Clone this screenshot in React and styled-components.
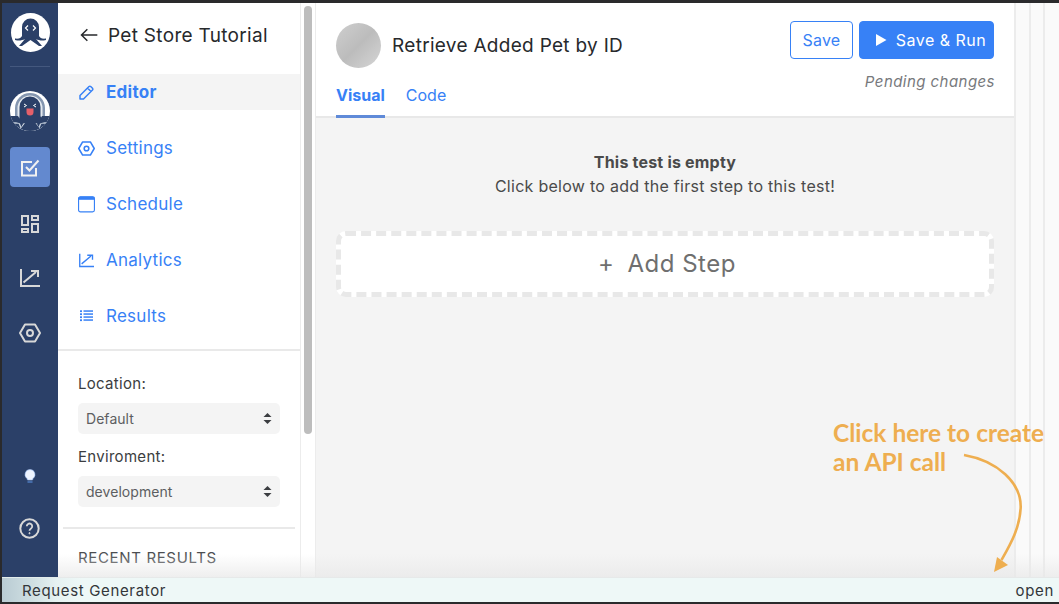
import React from 'react';
import styled, { createGlobalStyle } from 'styled-components';

const GlobalStyle = createGlobalStyle`
  html, body {
    margin: 0;
    padding: 0;
    height: 100%;
    overflow: hidden;
    background: #2a2a2c;
    font-family: Inter, "Liberation Sans", sans-serif;
  }
  * { box-sizing: border-box; }
`;

const Page = styled.div`
  position: relative;
  width: 1059px;
  height: 604px;
  display: flex;
  flex-direction: column;
  padding: 3px 0 2px 2px;
  background: #2a2a2c;
  overflow: hidden;
`;

const Body = styled.div`
  flex: 1;
  min-height: 0;
  display: flex;
  background: #fff;
`;

const NavRail = styled.nav`
  width: 56px;
  flex: none;
  display: flex;
  flex-direction: column;
  align-items: center;
  background: #2b4068;
  padding-top: 10px;
`;

const RailDivider = styled.div`
  width: 40px;
  height: 1px;
  background: #44587e;
  margin: 14px 0 24px -1px;
`;

const RailTile = styled.div`
  width: 40px;
  height: 40px;
  margin: 16px 0 0 -1px;
  display: flex;
  align-items: center;
  justify-content: center;
  border-radius: 4px;
  background: #6389cf;
  color: #f1f1f1;
`;

const RailIcon = styled.div`
  width: 40px;
  height: 30px;
  margin: ${(p) => p.$top}px 0 0 -1px;
  display: flex;
  align-items: center;
  justify-content: center;
  color: #d8d8d8;
`;

const SidePanel = styled.aside`
  width: 242px;
  flex: none;
  display: flex;
  flex-direction: column;
  overflow: hidden;
`;

const BackRow = styled.div`
  height: 64px;
  padding: 0 0 0 21px;
  display: flex;
  align-items: center;
  gap: 9px;
  color: #27292c;
  font-size: 19px;
  letter-spacing: 0.3px;
`;

const Menu = styled.div`
  margin-top: 7px;
  display: flex;
  flex-direction: column;
  gap: 20px;
  padding-bottom: 15px;
  border-bottom: 2px solid #e9e9e9;
`;

const MenuItem = styled.div`
  height: 36px;
  padding-left: 20px;
  display: flex;
  align-items: center;
  gap: 11px;
  color: #3781f6;
  font-size: 17px;
  letter-spacing: 0.25px;
  font-weight: ${(p) => (p.$active ? 700 : 400)};
  background: ${(p) => (p.$active ? '#f4f4f4' : 'transparent')};
`;

const IconSlot = styled.span`
  width: 17px;
  display: flex;
  justify-content: center;
`;

const Field = styled.div`
  padding: ${(p) => p.$top}px 20px 0;
`;

const FieldLabel = styled.div`
  color: #3b3d40;
  font-size: 15px;
  line-height: 18px;
  letter-spacing: 0.3px;
  margin-bottom: 10px;
`;

const Select = styled.div`
  height: 31px;
  border-radius: 5px;
  background: #f4f4f4;
  color: #5c5e61;
  font-size: 14px;
  letter-spacing: 0.05px;
  padding: 0 8px;
  display: flex;
  align-items: center;
  justify-content: space-between;
`;

const PanelRule = styled.div`
  height: 2px;
  margin: 20px 5px 20px;
  background: #e9e9e9;
`;

const SectionTitle = styled.div`
  padding-left: 20px;
  color: #4c4e51;
  font-size: 15px;
  line-height: 18px;
  letter-spacing: 0.65px;
`;

const ScrollGutter = styled.div`
  width: 16px;
  flex: none;
  padding: 3px 4px 0;
  background: #fff;
  border-left: 1px solid #ececec;
  border-right: 1px solid #ececec;
`;

const ScrollThumb = styled.div`
  width: 8px;
  height: 428px;
  margin-left: -1px;
  border-radius: 4px;
  background: #bdbdbd;
`;

const Main = styled.main`
  width: 698px;
  flex: none;
  display: flex;
  flex-direction: column;
  background: #f4f4f4;
`;

const TestHeader = styled.header`
  height: 115px;
  flex: none;
  background: #fff;
  border-bottom: 2px solid #e8e8e8;
  padding: 18px 20px 0 20px;
  display: flex;
  justify-content: space-between;
`;

const TitleBlock = styled.div`
  display: flex;
  flex-direction: column;
`;

const TitleRow = styled.div`
  display: flex;
  align-items: center;
  gap: 11px;
  padding-top: 2px;
`;

const TestAvatar = styled.div`
  width: 45px;
  height: 45px;
  border-radius: 50%;
  background: linear-gradient(135deg, #cfcfcf, #bcbcbc 50%, #d6d6d6);
`;

const TestTitle = styled.h1`
  margin: 0;
  color: #27292c;
  font-size: 19px;
  font-weight: 400;
  letter-spacing: 0.3px;
`;

const Tabs = styled.div`
  display: flex;
  gap: 21px;
  margin-top: 15px;
`;

const Tab = styled.div`
  height: 35px;
  color: #3781f6;
  font-size: 16px;
  line-height: 24px;
  font-weight: ${(p) => (p.$active ? 700 : 400)};
  border-bottom: ${(p) => (p.$active ? '3px solid #5f8ad8' : '0')};
`;

const Actions = styled.div`
  display: flex;
  flex-direction: column;
  align-items: flex-end;
`;

const ButtonRow = styled.div`
  display: flex;
  gap: 6px;
`;

const Button = styled.button`
  height: 38px;
  width: ${(p) => (p.$primary ? 135 : 63)}px;
  border: 1px solid #3781f6;
  border-radius: 4px;
  background: ${(p) => (p.$primary ? '#3781f6' : '#fff')};
  color: ${(p) => (p.$primary ? '#fff' : '#3781f6')};
  font-family: inherit;
  font-size: 16px;
  letter-spacing: ${(p) => (p.$primary ? 0.5 : 0.2)}px;
  display: flex;
  align-items: center;
  justify-content: center;
  gap: 9px;
  padding: 0 0 0 ${(p) => (p.$primary ? 8 : 0)}px;
`;

const Pending = styled.div`
  margin: 14px -1px 0 0;
  color: #77797c;
  font-size: 15px;
  font-style: italic;
  line-height: 18px;
  letter-spacing: 0.45px;
`;

const Content = styled.div`
  flex: 1;
  padding: 34px 20px 0;
  text-align: center;
`;

const EmptyTitle = styled.div`
  color: #4a4a4a;
  font-size: 16px;
  font-weight: 700;
  line-height: 20px;
  letter-spacing: 0.2px;
`;

const EmptyText = styled.div`
  color: #4a4a4a;
  font-size: 16px;
  line-height: 20px;
  margin-top: 4px;
  letter-spacing: 0.28px;
`;

const AddStep = styled.div`
  height: 66px;
  margin-top: 35px;
  padding: 0 0 1px 4px;
  background: #fff;
  border: 5px dashed #e8e8e8;
  border-radius: 10px;
  color: #6f6f6f;
  font-size: 24px;
  letter-spacing: 0.5px;
  display: flex;
  align-items: center;
  justify-content: center;
  gap: 13px;
`;

const SideStrip = styled.div`
  flex: ${(p) => (p.$last ? 1 : 'none')};
  width: 14.5px;
  background: #fafafa;
  border-left: 2px solid #ececec;
`;

const Drawer = styled.div`
  position: relative;
  height: 25px;
  flex: none;
  display: flex;
  align-items: center;
  justify-content: space-between;
  padding: 1px 5px 0 20px;
  background: linear-gradient(90deg, #b9cbd3 0, #cfdfe2 30px, #e6f2f2 55px, #eef8f7 80px);
  border-top: 1px solid #e2eceb;
  color: #33363a;
  font-size: 15px;
  letter-spacing: 0.65px;
  &::before {
    content: '';
    position: absolute;
    left: 56px;
    right: 0;
    bottom: 100%;
    height: 24px;
    background: linear-gradient(rgba(235, 235, 235, 0), rgba(232, 232, 232, 0.75));
  }
`;

const Hint = styled.div`
  position: absolute;
  left: 833px;
  top: 418px;
  color: #eeae50;
  font-family: Lato, sans-serif;
  font-weight: 700;
  font-size: 24.5px;
  line-height: 29px;
`;

const HintArrow = styled.svg`
  position: absolute;
  left: 960px;
  top: 450px;
`;

const BackArrow = () => (
  <svg width="20" height="20" viewBox="0 0 24 24" fill="none" stroke="currentColor" strokeWidth="1.800">
    <path d="M22 12H3M10 5l-7 7 7 7" />
  </svg>
);

const Logo = () => (
  <svg width="39" height="39" viewBox="0 0 39 39">
    <circle cx="19.500" cy="19.500" r="19.500" fill="#fff" />
    <path d="M11 14a8.500 8.500 0 0 1 17 0V23c1 2 3 3 7 2.500V27c-4 1-7 .5-10-1L31 33H28L19.500 27 11 33H8L14 26c-3 1.500-6 2-10 1V25.500c4 .5 6-.5 7-2.500z" fill="#2b4068" />
    <path d="M17 12.500l-2.500 2.500 2.500 2.500M22 12.500l2.500 2.500-2.500 2.500" fill="none" stroke="#fff" strokeWidth="1.200" />
  </svg>
);

const UserAvatar = () => (
  <svg width="40" height="40" viewBox="0 0 40 40">
    <defs>
      <clipPath id="avatar-clip">
        <circle cx="20" cy="20" r="20" />
      </clipPath>
    </defs>
    <g clipPath="url(#avatar-clip)">
      <rect width="40" height="40" fill="#fff" />
      <path d="M5 40V17a15 15 0 0 1 30 0v23z" fill="#8496b0" />
      <path d="M7.500 40V17a12.500 12.500 0 0 1 25 0v23z" fill="#e4e9ef" />
      <path d="M0 25h8l5 8-4 7H0zM40 25h-8l-5 8 4 7h9z" fill="#2b4068" />
      <path d="M0 32h9l3 7M40 32h-9l-3 7" fill="none" stroke="#c4cedb" strokeWidth="1.400" />
      <path d="M9.500 25V16a10.500 10.500 0 0 1 21 0v9c1 3 2 5 4 6l-6 2-3-1 6 8H9l6-8-3 1-6-2c3-1 3.500-3 3.500-6z" fill="#2b4068" />
      <path d="M14 13l2.500 1.500-2.500 1.500M26 13l-2.500 1.500 2.500 1.500" fill="none" stroke="#fff" strokeWidth="1" />
      <path d="M16.500 17.500h7v3.500a3.500 3.500 0 0 1-7 0z" fill="#e5606a" />
    </g>
  </svg>
);

const CheckSquareIcon = () => (
  <svg width="20" height="20" viewBox="0 0 20 20" fill="none" stroke="currentColor" strokeWidth="2">
    <path d="M16 11v7.500H2V5h10" />
    <path d="M6 10l3.500 3.500L18.500 3.500" />
  </svg>
);

const DashboardIcon = () => (
  <svg width="20" height="20" viewBox="0 0 20 20" fill="none" stroke="currentColor" strokeWidth="2">
    <rect x="2" y="2" width="6" height="9" />
    <rect x="12" y="2" width="6" height="4" />
    <rect x="12" y="10" width="6" height="8" />
    <rect x="2" y="15" width="6" height="3" />
  </svg>
);

const ChartIcon = ({ size = 20, width = 2 }) => (
  <svg width={size} height={size} viewBox="0 0 20 20" fill="none" stroke="currentColor" strokeWidth={width}>
    <path d="M1 1v17h19" />
    <path d="M3.500 14.500L16 4M11 3h7v6" />
  </svg>
);

const HexIcon = ({ size = 22, width = 2 }) => (
  <svg width={size} height={size} viewBox="0 0 22 22" fill="none" stroke="currentColor" strokeWidth={width} strokeLinejoin="round">
    <path d="M6 2.500h10l5 8.500-5 8.500H6L1 11z" />
    <circle cx="11" cy="11" r="3" />
  </svg>
);

const BulbIcon = () => (
  <svg width="12" height="14" viewBox="0 0 12 14">
    <path d="M6 .5a5 5 0 0 1 3 9l-.5 1.500h-5L3 9.500a5 5 0 0 1 3-9z" fill="#eef4ff" stroke="#9dc0f5" strokeWidth=".6" />
    <rect x="3.500" y="12.500" width="5" height="1" fill="#5f96e8" />
  </svg>
);

const HelpIcon = () => (
  <svg width="21" height="21" viewBox="0 0 21 21" fill="none" stroke="#d8d8d8" strokeWidth="2">
    <circle cx="10.500" cy="10.500" r="9.200" />
    <path d="M7.800 8.300a2.700 2.700 0 1 1 4.200 2.200c-1 .7-1.500 1.100-1.500 2.200" strokeWidth="1.800" />
    <circle cx="10.500" cy="15.200" r=".6" fill="#d8d8d8" strokeWidth="1" />
  </svg>
);

const PencilIcon = () => (
  <svg width="15" height="15" viewBox="0 0 15 15" fill="none" stroke="currentColor" strokeWidth="1.500" strokeLinejoin="round">
    <path d="M1 14v-3.500L10 1.500a1.200 1.200 0 0 1 1.700 0l1.800 1.800a1.200 1.200 0 0 1 0 1.700L4.500 14zM8.500 3l3.500 3.500" />
  </svg>
);

const CalendarIcon = () => (
  <svg width="18" height="18" viewBox="0 0 18 18" fill="none" stroke="currentColor" strokeWidth="1.200">
    <rect x=".6" y="1.600" width="16.800" height="15.800" rx="2" />
    <path d="M.6 3.500a2 2 0 0 1 2-2h12.800a2 2 0 0 1 2 2v.5H.6z" fill="currentColor" />
  </svg>
);

const ListIcon = () => (
  <svg width="13" height="12" viewBox="0 0 13 12" fill="currentColor">
    {[0, 3, 6, 9].map((y) => (
      <React.Fragment key={y}>
        <rect x="0" y={y + 0.3} width="2" height="1.800" />
        <rect x="3.500" y={y + 0.3} width="9.500" height="1.500" />
      </React.Fragment>
    ))}
  </svg>
);

const SortCaret = () => (
  <svg width="9" height="11" viewBox="0 0 9 11" fill="#3b3d40">
    <path d="M4.500 0L8.500 4H.5zM4.500 11L.5 7h8z" />
  </svg>
);

const menuItems = [
  { label: 'Editor', icon: <PencilIcon />, active: true },
  { label: 'Settings', icon: <HexIcon size={17} width={2} /> },
  { label: 'Schedule', icon: <CalendarIcon /> },
  { label: 'Analytics', icon: <ChartIcon size={15} width={1.800} /> },
  { label: 'Results', icon: <ListIcon /> },
];

export default function App() {
  return (
    <Page>
      <GlobalStyle />
      <Body>
        <NavRail>
          <Logo />
          <RailDivider />
          <UserAvatar />
          <RailTile>
            <CheckSquareIcon />
          </RailTile>
          <RailIcon $top={22}><DashboardIcon /></RailIcon>
          <RailIcon $top={24}><ChartIcon /></RailIcon>
          <RailIcon $top={25}><HexIcon /></RailIcon>
          <RailIcon $top={113}><BulbIcon /></RailIcon>
          <RailIcon $top={22}><HelpIcon /></RailIcon>
        </NavRail>

        <SidePanel>
          <BackRow>
            <BackArrow />
            Pet Store Tutorial
          </BackRow>
          <Menu>
            {menuItems.map((item) => (
              <MenuItem key={item.label} $active={item.active}>
                <IconSlot>{item.icon}</IconSlot>
                {item.label}
              </MenuItem>
            ))}
          </Menu>
          <Field $top={24}>
            <FieldLabel>Location:</FieldLabel>
            <Select>Default<SortCaret /></Select>
          </Field>
          <Field $top={14}>
            <FieldLabel>Enviroment:</FieldLabel>
            <Select>development<SortCaret /></Select>
          </Field>
          <PanelRule />
          <SectionTitle>RECENT RESULTS</SectionTitle>
        </SidePanel>

        <ScrollGutter>
          <ScrollThumb />
        </ScrollGutter>

        <Main>
          <TestHeader>
            <TitleBlock>
              <TitleRow>
                <TestAvatar />
                <TestTitle>Retrieve Added Pet by ID</TestTitle>
              </TitleRow>
              <Tabs>
                <Tab $active>Visual</Tab>
                <Tab>Code</Tab>
              </Tabs>
            </TitleBlock>
            <Actions>
              <ButtonRow>
                <Button>Save</Button>
                <Button $primary>
                  <svg width="12" height="12" viewBox="0 0 12 12" fill="#fff"><path d="M1 0l10.500 6L1 12z" /></svg>
                  Save &amp; Run
                </Button>
              </ButtonRow>
              <Pending>Pending changes</Pending>
            </Actions>
          </TestHeader>
          <Content>
            <EmptyTitle>This test is empty</EmptyTitle>
            <EmptyText>Click below to add the first step to this test!</EmptyText>
            <AddStep><span>+</span><span>Add Step</span></AddStep>
          </Content>
        </Main>

        <SideStrip />
        <SideStrip />
        <SideStrip $last />
      </Body>
      <Drawer>
        <span>Request Generator</span>
        <span>open</span>
      </Drawer>
      <Hint>Click here to create<br />an API call</Hint>
      <HintArrow width="70" height="130" viewBox="0 0 70 130" fill="none">
        <path d="M4 5C38 11 61 33 60.700 57C60 78 50 95 41.500 110" stroke="#eeae50" strokeWidth="2.600" />
        <path d="M34 122L37 107L48 115z" fill="#eeae50" />
      </HintArrow>
    </Page>
  );
}
